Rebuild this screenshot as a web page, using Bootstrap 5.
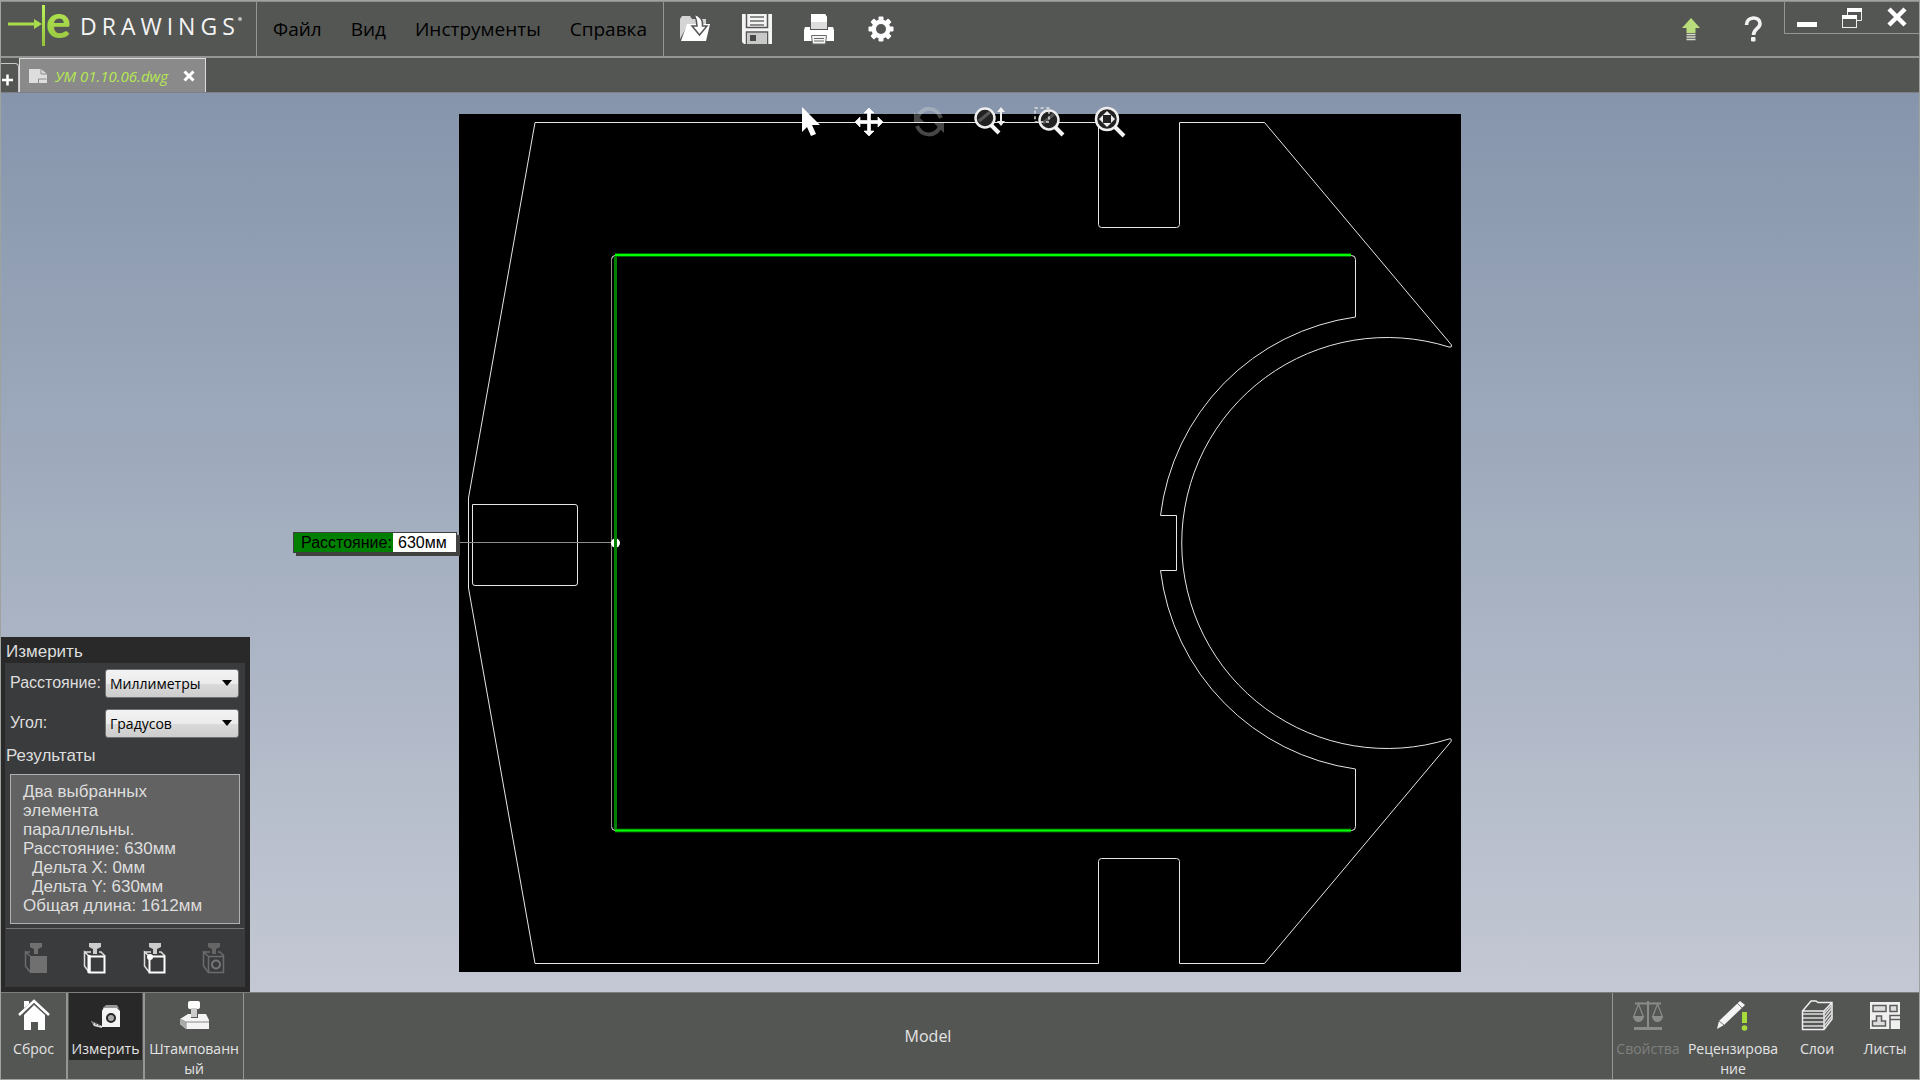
<!DOCTYPE html>
<html lang="ru">
<head>
<meta charset="utf-8">
<meta name="viewport" content="width=device-width, initial-scale=1">
<title>eDrawings – УМ 01.10.06.dwg</title>
<link href="https://cdn.jsdelivr.net/npm/bootstrap@5.3.0/dist/css/bootstrap.min.css" rel="stylesheet">
<style>
  :root { --bar:#545654; --edge:#949694; --lime:#b5e853; }
  body { font-family:"Open Sans","Noto Sans",sans-serif; background:#545654; }
  .app { border:1px solid #a0a2a0; background:var(--bar); }
  button { background:none; border:0; padding:0; color:inherit; }
  svg { display:block; flex:none; overflow:visible; }
  .topbar { height:57px; border-bottom:2px solid var(--edge); border-top:1px solid #8c8e8c; }
  .brand { width:256px; border-right:1px solid var(--edge); }
  .menus { border-right:1px solid var(--edge); padding-left:16px; padding-right:16px; gap:29px; }
  .menus a { color:#000; font-size:19px; line-height:26px; text-decoration:none; }
  .tool { width:62px; }
  .winbox { height:32px; border-left:1px solid var(--edge); border-bottom:1px solid var(--edge); width:135px; }
  .winbox button { width:45px; }
  .tabs { height:34px; }
  .addtab { width:18px; height:29px; border:1px solid #c8c8c8; border-width:1px 1px 0 0; border-radius:0 4px 0 0; }
  .doctab { width:187px; height:34px; background:#8a8a8a; border:1px solid #dcdcdc; border-bottom:0; padding:0 10px 0 9px; }
  .doctab a { color:var(--lime); font-style:italic; font-size:15px; line-height:20px; text-decoration:none; }
  .stage { background:linear-gradient(#8695ac,#a4afc0 50%,#c4c8d4); border-top:1px solid #7c8086; padding:21px 0 20px; min-height:0; }
  .sheet { width:100%; height:100%; }
  .viewtools { top:7px; left:0; right:0; }
  .viewtools button { width:60px; height:44px; padding-right:2px; }
  .callout { right:calc(50% + 503px); top:calc(50% - 11px); height:21px; border:1px solid #404040; background:#008000; box-shadow:3px 3px 0 #404040; font:16px/19px "Liberation Sans",sans-serif; color:#000; }
  .callout .val { background:#fff; width:63px; padding-left:5px; }
  .callout .cap { width:99px; padding-left:7px; }
  .measure { left:0; bottom:0; width:249px; background:#292929; padding:4px 5px 5px 4px; color:#dedede; font-family:"Liberation Sans",sans-serif; font-size:16px; }
  .measure h2 { font-size:17px; line-height:22px; margin:0; padding-left:1px; font-weight:400; }
  .inner { background:#3a3b3c; }
  .fld { height:40px; padding:0 5px; font-size:16px; }
  .fld label { width:95px; white-space:nowrap; }
  .fld select { width:134px; height:29px; border:1px solid #707070; border-radius:3px; padding:0 20px 0 4px; font:14px/25px "Open Sans","Noto Sans",sans-serif; color:#000; appearance:none;
    background:url("data:image/svg+xml,%3Csvg xmlns='http://www.w3.org/2000/svg' width='10' height='6'%3E%3Cpath d='M0 0h10L5 6z'/%3E%3C/svg%3E") no-repeat right 6px center, linear-gradient(#f3f3f3,#ebebeb 50%,#dadada 51%,#cdcdcd); }
  .reshead { padding-left:1px; line-height:26px; font-size:17px; }
  .results { margin:5px 5px 4px; height:150px; border:1px solid #b0b0b0; background:#626262; padding:7px 12px; font-size:17px; line-height:19px; }
  .results .sub { padding-left:9px; }
  .stamps { border-top:1px solid #747474; height:59px; margin:0 1px; }
  .stamps button { width:60px; }
  .bottombar { height:87px; border-top:1px solid #7c7e7c; color:#e4e4e4; font-size:14px; line-height:20px; }
  .bottombar button { padding-top:6px; }
  .bottombar svg { margin-bottom:8px; }
  .cell-a { width:67px; border-right:2px solid var(--edge); }
  .cell-b { width:77px; border-right:2px solid var(--edge); padding:0 1px; }
  .cell-b button { background:#282828; height:67px; }
  .cell-c { width:99px; border-right:1px solid var(--edge); }
  .rightset { border-left:1px solid var(--edge); width:307px; }
  .w-props { width:70px; color:#7e807e; }
  .w-review { width:100px; }
  .w-layers { width:68px; }
</style>
<script src="https://cdn.jsdelivr.net/npm/bootstrap@5.3.0/dist/js/bootstrap.bundle.min.js"></script>
</head>
<body>
<div class="app d-flex flex-column vh-100">

  <header class="topbar d-flex flex-shrink-0">
    <div class="brand d-flex flex-shrink-0">
      <svg width="255" height="54" viewBox="1 2 255 54" role="img" aria-label="eDrawings">
        <defs><linearGradient id="lg" x1="0" y1="0" x2="0" y2="1"><stop offset="0" stop-color="#bdf25a"/><stop offset="1" stop-color="#94c23c"/></linearGradient></defs>
        <path d="M8 22.500h26v-3.500l8 5-8 5v-3.500H8z" fill="#a9dc4a"/>
        <rect x="42" y="5" width="3" height="41" fill="url(#lg)"/>
        <text x="46" y="38" font-family="Lato" font-weight="900" font-size="46" fill="url(#lg)">e</text>
        <text x="80" y="35" font-family="Open Sans" font-size="23" letter-spacing="5" fill="#f4f4f4">DRAWINGS</text>
        <circle cx="240" cy="19" r="2" fill="#bbb"/>
      </svg>
    </div>
    <nav class="menus d-flex align-items-center flex-shrink-0">
      <a href="#">Файл</a><a href="#">Вид</a><a href="#">Инструменты</a><a href="#">Справка</a>
    </nav>
    <div class="d-flex flex-grow-1 align-items-stretch">
      <button class="tool d-flex align-items-center justify-content-center" aria-label="Открыть">
        <svg width="32" height="32" viewBox="0 0 32 32"><path d="M1 26V6l2-3h8l2 3h14v7H8z" fill="#d4d4d4"/><path d="M8 11h23l-4 17H2z" fill="#fff"/><path d="M15 1c7 2 9 7 8.500 12H28l-7.500 9L13 13h5c0-5-1-8-3-12z" fill="#fff" stroke="#545654" stroke-width="1.500"/></svg>
      </button>
      <button class="tool d-flex align-items-center justify-content-center" aria-label="Сохранить">
        <svg width="32" height="32" viewBox="0 0 32 32"><path d="M1 1h30v30H3l-2-2z" fill="#f4f4f4"/><path d="M5.500 1v13.500h21V1M5.500 31V19h21v12" fill="none" stroke="#545654" stroke-width="1.500"/><path d="M9 4h14M9 8h14M9 12h14" stroke="#6a6c6a" stroke-width="1.500"/><rect x="7" y="20" width="18" height="11" fill="#c8c8c8"/><rect x="9" y="22" width="6" height="6" fill="#484a48"/></svg>
      </button>
      <button class="tool d-flex align-items-center justify-content-center" aria-label="Печать">
        <svg width="32" height="32" viewBox="0 0 32 32"><path d="M8 1h14l2 3v12H8z" fill="#ddd"/><path d="M8 1h14l2 3v5H8z" fill="#fff"/><path d="M2 14h5v3h18v-3h5l1 3v11H1V17z" fill="#fff"/><path d="M8.500 22.500h15l-1 8.500h-13z" fill="#f4f4f4" stroke="#686a68"/><path d="M11 25.500h10M11 28h10" stroke="#686a68" stroke-width="1.200"/></svg>
      </button>
      <button class="tool d-flex align-items-center justify-content-center" aria-label="Параметры">
        <svg width="28" height="28" viewBox="-14 -14 28 28"><g fill="#fff"><rect x="-2.500" y="-12.500" width="5" height="25" rx="1"/><rect x="-2.500" y="-12.500" width="5" height="25" rx="1" transform="rotate(45)"/><rect x="-2.500" y="-12.500" width="5" height="25" rx="1" transform="rotate(90)"/><rect x="-2.500" y="-12.500" width="5" height="25" rx="1" transform="rotate(135)"/><circle r="9.500"/></g><circle r="5" fill="#545654"/></svg>
      </button>
    </div>
    <button class="tool d-flex align-items-center justify-content-center" aria-label="Обновить">
      <svg width="20" height="26" viewBox="0 0 20 26"><path d="M10 2l9 10h-4.500v5h-9v-5H1z" fill="#b9dc7d"/><path d="M5.500 18.500h9M5.500 21h9M5.500 23.500h9" stroke="#d8dccb" stroke-width="1.500"/></svg>
    </button>
    <button class="tool d-flex align-items-center justify-content-center" aria-label="Справка">
      <svg width="20" height="28" viewBox="0 0 20 28"><path d="M3.500 10c0-9 13.500-9 13.500-1.500 0 5.500-6.500 5-6.500 11.500" fill="none" stroke="#f2f2f2" stroke-width="3.600"/><rect x="8" y="22" width="4.500" height="4.500" rx="1" fill="#f2f2f2"/></svg>
    </button>
    <div class="winbox d-flex flex-shrink-0">
      <button class="d-flex align-items-center justify-content-center" aria-label="Свернуть"><svg width="22" height="24"><rect x="1" y="16" width="20" height="5" fill="#fff"/></svg></button>
      <button class="d-flex align-items-center justify-content-center" aria-label="Развернуть"><svg width="22" height="24" viewBox="0 0 22 24"><g fill="none" stroke="#eee"><path d="M6.500 9V2.500h14v12H16"/><rect x="1.500" y="9.500" width="14" height="12"/></g><path d="M6 2h15v4H6zM1 9h15v4H1z" fill="#fff"/></svg></button>
      <button class="d-flex align-items-center justify-content-center" aria-label="Закрыть"><svg width="22" height="22"><path d="M3 2l16 16M19 2L3 18" stroke="#fff" stroke-width="4.500"/></svg></button>
    </div>
  </header>

  <div class="tabs d-flex align-items-end flex-shrink-0">
    <button class="addtab d-flex align-items-center" aria-label="Новая вкладка"><svg width="13" height="14"><path d="M1 9h11M6.500 3.500v11" stroke="#fff" stroke-width="2.500"/></svg></button>
    <div class="doctab d-flex align-items-center">
      <svg width="18" height="16" viewBox="0 0 18 16"><path d="M0 1h12l6 5v9H0z" fill="#ddd"/><path d="M12 1v5h6M9.500 15v-4h8" fill="none" stroke="#8a8a8a"/></svg>
      <a href="#" class="ms-2 flex-grow-1 text-nowrap">УМ 01.10.06.dwg</a>
      <button aria-label="Закрыть вкладку"><svg width="12" height="12"><path d="M1.500 1.500l9 9M10.500 1.500l-9 9" stroke="#fff" stroke-width="3"/></svg></button>
    </div>
  </div>

  <main class="stage position-relative flex-grow-1">
    <svg class="sheet" viewBox="459 114 1002 858" role="img" aria-label="Чертёж">
      <rect x="459" y="114" width="1002" height="858"/>
      <g fill="none" stroke="#e6e6e6">
        <path d="M1098.500 122.500H535L468.500 498V588L535 963.500H1098.500V861.500Q1098.500 858.500 1101.500 858.500H1176.500Q1179.500 858.500 1179.500 861.500V963.500H1264.500L1451 741.500Q1452 738 1449 739A205.500 205.500 0 1 1 1449 347Q1452 348 1451.500 345L1264.500 122.500H1179.500V224.500Q1179.500 227.500 1176.500 227.500H1101.500Q1098.500 227.500 1098.500 224.500Z"/>
        <path d="M472.500 504.500H575Q577.500 504.500 577.500 507V583Q577.500 585.500 575 585.500H475Q472.500 585.500 472.500 583Z"/>
        <path d="M1160.500 515.500A228 228 0 0 1 1355.500 317V259.500Q1355.500 255.500 1351.500 255.500H615.500Q611.500 255.500 611.500 259.500" />
        <path d="M1160.500 570.500A228 228 0 0 0 1355.500 769V826.500Q1355.500 830.500 1351.500 830.500H615.500Q611.500 830.500 611.500 826.500"/>
        <path d="M1160.500 515.500H1176.500V570.500H1160.500"/>
        <path d="M611.500 259V827M459 542.500H612" stroke="#8c8c8c"/>
      </g>
      <circle cx="615.500" cy="543" r="4.500" fill="#fff"/>
      <path d="M615.500 256V830" stroke="#008000" stroke-width="3"/>
      <path d="M615 255H1351M615 830.500H1351" stroke="#006000" stroke-width="4"/>
      <path d="M615 255H1351M615 830.500H1351" stroke="#00ff00" stroke-width="2"/>
    </svg>

    <div class="viewtools position-absolute d-flex justify-content-center">
      <button class="d-flex align-items-center justify-content-center" aria-label="Выбор"><svg width="30" height="32" viewBox="0 0 30 32"><path d="M8 1v25l5-5 4 9 5-2-4-9h8z" fill="#fff"/></svg></button>
      <button class="d-flex align-items-center justify-content-center" aria-label="Перемещение"><svg width="30" height="30" viewBox="-15 -15 30 30"><path d="M-1.500-9H-5L0-14 5-9H1.500V-1.500H9V-5L14 0 9 5V1.500H1.500V9H5L0 14-5 9H-1.500V1.500H-9V5L-14 0-9-5V-1.500H-1.500z" fill="#fff" stroke="#fff" stroke-width=".7"/></svg></button>
      <button class="d-flex align-items-center justify-content-center" aria-label="Вращение" disabled><svg width="32" height="32" viewBox="0 0 32 32"><g opacity=".32"><path d="M5 11C10 0 23 0 28 12M4 20c5 11 18 11 23 1" fill="none" stroke="#ddd" stroke-width="4"/><path d="M1 6v10h10zM31 27V16H20z" fill="#ddd"/></g></svg></button>
      <button class="d-flex align-items-center justify-content-center" aria-label="Масштаб"><svg width="32" height="32" viewBox="0 0 32 32"><circle cx="12" cy="12" r="9.500" fill="#222" stroke="#eee" stroke-width="2.500"/><path d="M6 15l11-9" stroke="#555" stroke-width="3"/><path d="M18 19l8 8" stroke="#f4f4f4" stroke-width="4"/><path d="M28 1l4 5h-3v9h3l-4 5-4-5h3V6h-3z" fill="#eee"/></svg></button>
      <button class="d-flex align-items-center justify-content-center" aria-label="Масштаб области"><svg width="32" height="32" viewBox="0 0 32 32"><circle cx="16" cy="14" r="9.500" fill="#222" stroke="#eee" stroke-width="2.500"/><path d="M10 17l11-9" stroke="#555" stroke-width="3"/><path d="M22 21l8 8" stroke="#f4f4f4" stroke-width="4"/><rect x="2" y="2" width="14" height="14" fill="none" stroke="#ddd" stroke-width="1.500" stroke-dasharray="3 2.600"/></svg></button>
      <button class="d-flex align-items-center justify-content-center" aria-label="По размеру"><svg width="32" height="32" viewBox="0 0 32 32"><circle cx="14" cy="13" r="11" fill="#222" stroke="#eee" stroke-width="2.500"/><path d="M22 21l9 9" stroke="#f4f4f4" stroke-width="4"/><path d="M14 5l4 4h-8zM14 21l4-4h-8zM6 13l4-4v8zM22 13l-4-4v8z" fill="#eee"/></svg></button>
    </div>

    <div class="callout position-absolute d-flex text-nowrap"><span class="cap">Расстояние:</span><span class="val">630мм</span></div>

    <section class="measure position-absolute">
      <h2>Измерить</h2>
      <div class="inner">
        <div class="fld d-flex align-items-center"><label for="du">Расстояние:</label><select id="du"><option>Миллиметры</option><option>Сантиметры</option><option>Метры</option></select></div>
        <div class="fld d-flex align-items-center"><label for="au">Угол:</label><select id="au"><option>Градусов</option><option>Радиан</option></select></div>
        <div class="reshead">Результаты</div>
        <div class="results">
          <div>Два выбранных<br>элемента<br>параллельны.</div>
          <div>Расстояние: 630мм</div>
          <div class="sub">Дельта X: 0мм</div>
          <div class="sub">Дельта Y: 630мм</div>
          <div>Общая длина: 1612мм</div>
        </div>
        <div class="stamps d-flex align-items-center">
          <button class="d-flex justify-content-center" aria-label="Грань" disabled><svg width="24" height="32" viewBox="0 0 24 32"><path d="M6 14L1.500 10v14L6 30M1.500 10H6" fill="none" stroke="#6c6c6c" stroke-width="1.500"/><rect x="6" y="14" width="17" height="17" fill="#707070"/><path d="M6 1h12v4l-4 2v5h-4V7L6 5z" fill="#707070"/></svg></button>
          <button class="d-flex justify-content-center" aria-label="Кромка"><svg width="24" height="32" viewBox="0 0 24 32"><path d="M6 14L1.500 10v14L6 30M1.500 10H8M16 10h2l4 4" fill="none" stroke="#ddd" stroke-width="1.500"/><rect x="6.500" y="14.500" width="15" height="16" fill="none" stroke="#fff" stroke-width="2"/><path d="M6 13v18" stroke="#fff" stroke-width="3"/><path d="M6 1h12v4l-4 2v5h-4V7L6 5z" fill="#ccc"/></svg></button>
          <button class="d-flex justify-content-center" aria-label="Точка"><svg width="24" height="32" viewBox="0 0 24 32"><path d="M6 14L1.500 10v14L6 30M1.500 10H8M16 10h2l4 4" fill="none" stroke="#ddd" stroke-width="1.500"/><rect x="6.500" y="14.500" width="15" height="16" fill="none" stroke="#fff" stroke-width="2"/><circle cx="7" cy="15" r="3" fill="#fff"/><path d="M6 1h12v4l-4 2v5h-4V7L6 5z" fill="#ccc"/></svg></button>
          <button class="d-flex justify-content-center" aria-label="Отверстие" disabled><svg width="24" height="32" viewBox="0 0 24 32"><path d="M6 14L1.500 10v14L6 30M1.500 10H8M16 10h2l4 4" fill="none" stroke="#6c6c6c" stroke-width="1.500"/><rect x="6.500" y="14.500" width="15" height="16" fill="none" stroke="#6c6c6c" stroke-width="1.500"/><circle cx="14" cy="22.500" r="4" fill="none" stroke="#777" stroke-width="2"/><path d="M6 1h12v4l-4 2v5h-4V7L6 5z" fill="#666"/></svg></button>
        </div>
      </div>
    </section>
  </main>

  <footer class="bottombar d-flex flex-shrink-0">
    <div class="cell-a d-flex align-items-start"><button class="w-100 d-flex flex-column align-items-center"><svg width="32" height="32" viewBox="0 0 32 32"><path d="M1 16L16 2l15 14" fill="none" stroke="#fff" stroke-width="2.500"/><path d="M6 2h5v3L6 9zM16 6l11 10v15h-7v-8h-7v8H6V16z" fill="#fff"/></svg><span>Сброс</span></button></div>
    <div class="cell-b"><button class="w-100 d-flex flex-column align-items-center"><svg width="32" height="32" viewBox="0 0 32 32"><path d="M14 8h12l4 4v16H12V12z" fill="#f4f4f4"/><path d="M13 9l3-3h11l3 5-2-2H15z" fill="#999"/><circle cx="21" cy="19" r="4" fill="#aaa" stroke="#282828" stroke-width="2"/><path d="M12 27L1 22l3 5 8 2z" fill="#ddd"/><path d="M3 22v3M6 23v3M9 24v3" stroke="#444"/></svg><span>Измерить</span></button></div>
    <div class="cell-c d-flex align-items-start"><button class="w-100 d-flex flex-column align-items-center"><svg width="32" height="32" viewBox="0 0 32 32"><rect x="10" y="2" width="12" height="8" rx="2" fill="#fff"/><path d="M13 9h6v9h-6z" fill="#ccc"/><path d="M2 20l8-5h3v4h7v-4h8l3 6v9H8l-6-5z" fill="#f4f4f4"/><path d="M2 20l6 3h23M8 23v7" fill="none" stroke="#888"/><path d="M2 20l6 3v7l-6-5z" fill="#aaa"/></svg><span>Штампованн<br>ый</span></button></div>
    <div class="flex-grow-1 d-flex align-items-center justify-content-center fs-6">Model</div>
    <div class="rightset d-flex align-items-start">
      <button class="w-props d-flex flex-column align-items-center" disabled><svg width="32" height="32" viewBox="0 0 32 32"><path d="M3 4.500h26M16 2v26" stroke="#8a8c8a" stroke-width="2"/><path d="M2 31h28v-3H2z" fill="#8a8c8a"/><path d="M6.500 5L1.500 18h10zM25.500 5l-5 13h10z" fill="none" stroke="#8a8c8a" stroke-width="1.200"/><path d="M1 17h11q-1 6-5.500 6T1 17zM20 17h11q-1 6-5.500 6T20 17z" fill="#8a8c8a"/></svg><span>Свойства</span></button>
      <button class="w-review d-flex flex-column align-items-center"><svg width="32" height="32" viewBox="0 0 32 32"><path d="M0 30l2-8L23 2l5 4L7 26z" fill="#f4f4f4"/><path d="M2 22l5 4M20 4l5 5" stroke="#777"/><path d="M25 13h5v11h-5z" fill="#a5dc3c"/><circle cx="27.500" cy="29" r="2.800" fill="#a5dc3c"/></svg><span>Рецензирова<br>ние</span></button>
      <button class="w-layers d-flex flex-column align-items-center"><svg width="32" height="32" viewBox="0 0 32 32"><path d="M1.500 12L10 2h5l2 1.500h14V20l-8 10.500H1.500zM1.500 12H23V30M23 12l8-8.500" fill="none" stroke="#eee" stroke-width="1.500"/><path d="M2 15h21l8-9M2 19h21l8-10M2 23h21l8-10M2 27h21l8-10" fill="none" stroke="#ddd" stroke-width="1.500"/></svg><span>Слои</span></button>
      <button class="d-flex flex-column align-items-center flex-grow-1"><svg width="32" height="32" viewBox="0 0 32 32"><path d="M1 3h30v27H1z" fill="#f0f0f0"/><g fill="#ddd" stroke="#5a5c5a" stroke-width="1.500"><rect x="4" y="6.500" width="13" height="6"/><rect x="21" y="6.500" width="7" height="6"/><path d="M7.500 17h5v5h4v5h-13v-5h4z"/></g><path d="M21 30V16.500h10M21 20.500h10" stroke="#5a5c5a" stroke-width="1.500" fill="none"/></svg><span>Листы</span></button>
    </div>
  </footer>
</div>
</body>
</html>
